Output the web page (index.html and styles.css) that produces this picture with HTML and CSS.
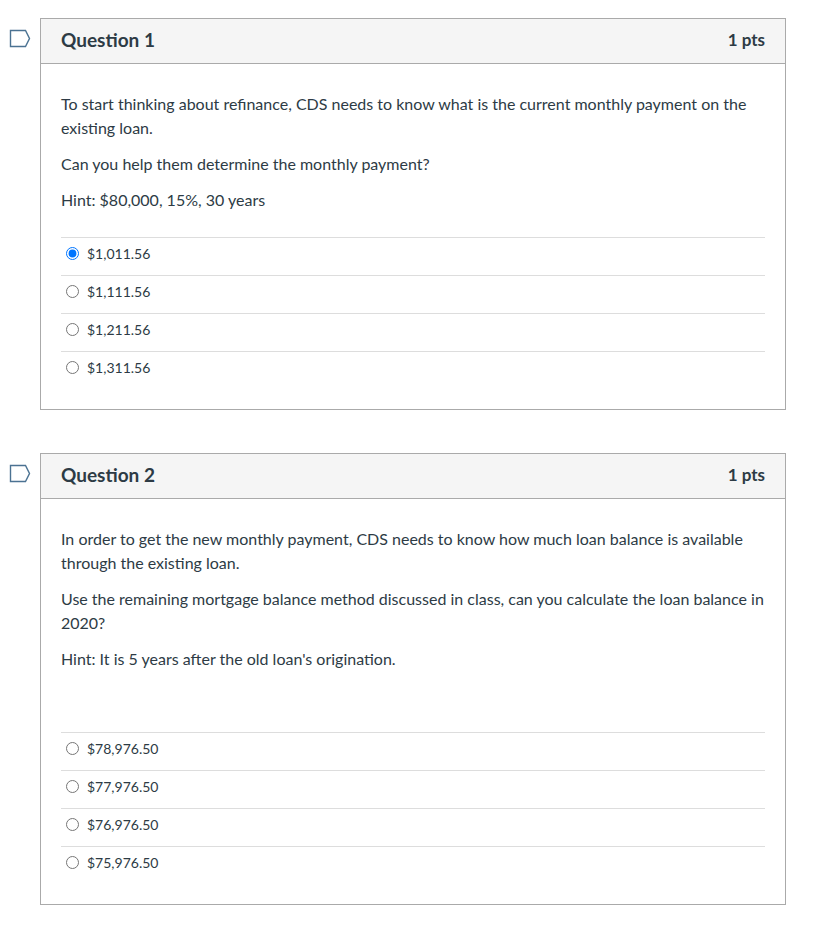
FILE: index.html
```html
<!DOCTYPE html>
<html>
<head>
<meta charset="utf-8">
<link rel="stylesheet" href="styles.css">
</head>
<body>
<div class="quiz">
  <div class="question">
    <svg class="flag" width="22" height="20" viewBox="0 0 22 20"><path d="M1.5 1.5 H16.5 L20.5 9.5 L16.5 17.5 H1.5 Z" fill="none" stroke="#4b7292" stroke-width="1.4"/></svg>
    <div class="card">
      <div class="card-header">
        <span class="q-title">Question 1</span>
        <span class="q-pts">1 pts</span>
      </div>
      <div class="card-body">
        <p>To start thinking about refinance, CDS needs to know what is the current monthly payment on the existing loan.</p>
        <p>Can you help them determine the monthly payment?</p>
        <p>Hint: $80,000, 15%, 30 years</p>
        <div class="answers">
          <label class="answer"><input type="radio" name="q1" checked><span>$1,011.56</span></label>
          <label class="answer"><input type="radio" name="q1"><span>$1,111.56</span></label>
          <label class="answer"><input type="radio" name="q1"><span>$1,211.56</span></label>
          <label class="answer"><input type="radio" name="q1"><span>$1,311.56</span></label>
        </div>
      </div>
    </div>
  </div>
  <div class="question">
    <svg class="flag" width="22" height="20" viewBox="0 0 22 20"><path d="M1.5 1.5 H16.5 L20.5 9.5 L16.5 17.5 H1.5 Z" fill="none" stroke="#4b7292" stroke-width="1.4"/></svg>
    <div class="card">
      <div class="card-header">
        <span class="q-title">Question 2</span>
        <span class="q-pts">1 pts</span>
      </div>
      <div class="card-body">
        <p>In order to get the new monthly payment, CDS needs to know how much loan balance is available through the existing loan.</p>
        <p>Use the remaining mortgage balance method discussed in class, can you calculate the loan balance in 2020?</p>
        <p>Hint: It is 5 years after the old loan's origination.</p>
        <p>&nbsp;</p>
        <div class="answers">
          <label class="answer"><input type="radio" name="q2"><span>$78,976.50</span></label>
          <label class="answer"><input type="radio" name="q2"><span>$77,976.50</span></label>
          <label class="answer"><input type="radio" name="q2"><span>$76,976.50</span></label>
          <label class="answer"><input type="radio" name="q2"><span>$75,976.50</span></label>
        </div>
      </div>
    </div>
  </div>
</div>
</body>
</html>
```
FILE: styles.css
```css
html, body {
  margin: 0;
  padding: 0;
  background: #fff;
}
body {
  font-family: Lato, "Noto Sans", sans-serif;
  color: #2d3b45;
}
.quiz {
  padding: 18px 37px 0 0;
  display: flex;
  flex-direction: column;
  gap: 43px;
}
.question {
  display: flex;
  align-items: flex-start;
}
.flag {
  width: 22px;
  height: 20px;
  margin: 11px 9px 0 9px;
  flex: none;
}
.card {
  flex: 1;
  border: 1px solid #aaaaaa;
}
.card-header {
  background: #f5f5f5;
  border-bottom: 1px solid #aaaaaa;
  height: 45px;
  padding: 0 20px 3px 20px;
  box-sizing: border-box;
  display: flex;
  align-items: center;
  justify-content: space-between;
}
.q-title {
  font-size: 19px;
  font-weight: bold;
}
.q-pts {
  font-size: 17px;
  font-weight: bold;
}
.card-body {
  padding: 28px 20px 20px 20px;
}
.card-body p {
  margin: 0 0 12px 0;
  font-size: 16px;
  line-height: 24px;
}
.answers {
  margin-top: 25px;
}
.answer {
  display: flex;
  align-items: center;
  padding-bottom: 6px;
  height: 31px;
  border-top: 1px solid #dddddd;
  font-size: 14px;
}
.answer input {
  margin: 0 8px 0 5px;
  width: 13px;
  height: 13px;
}
```
